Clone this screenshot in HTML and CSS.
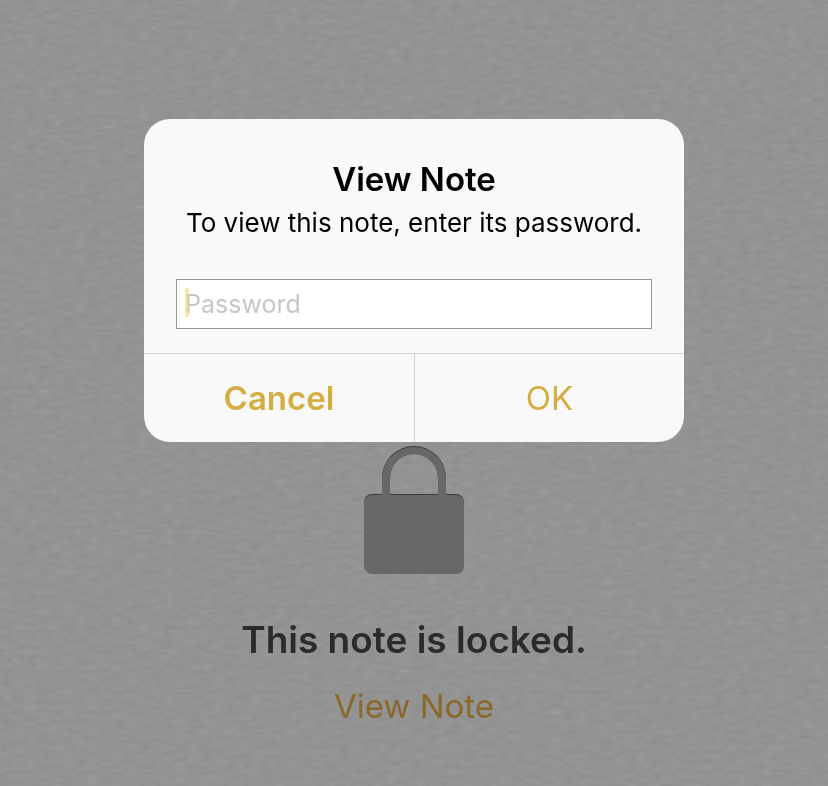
FILE: index.html
```html
<!DOCTYPE html>
<html lang="en">
<head>
  <meta charset="utf-8">
  <meta name="viewport" content="width=device-width, initial-scale=1">
  <title>View Note</title>
  <link rel="stylesheet" href="styles.css">
</head>
<body>
  <svg class="paper" aria-hidden="true">
    <filter id="grain" x="0" y="0" width="100%" height="100%" color-interpolation-filters="sRGB">
      <feTurbulence type="fractalNoise" baseFrequency="0.08 0.2" numOctaves="3" seed="4"/>
      <feColorMatrix values="0.06 0 0 0 0.547  0.06 0 0 0 0.547  0.06 0 0 0 0.547  0 0 0 0 1"/>
    </filter>
    <rect width="100%" height="100%" filter="url(#grain)"/>
  </svg>

  <main class="locked-note">
    <svg class="lock" viewBox="0 0 100 128" aria-hidden="true">
      <path class="lock-edge" d="M18 52V32a32 32 0 0 1 64 0v20h-8V32a24 24 0 0 0-48 0v20z"/>
      <rect class="lock-edge" y="48" width="100" height="60" rx="8"/>
      <path class="lock-fill" d="M18 52V33a32 32 0 0 1 64 0v19h-8V32a24 24 0 0 0-48 0v20z"/>
      <rect class="lock-fill" y="49" width="100" height="79" rx="8"/>
    </svg>
    <h1 class="locked-title">This note is locked.</h1>
    <a class="view-link" href="#dialog">View Note</a>
  </main>

  <form class="dialog" id="dialog" role="dialog" aria-labelledby="dialog-title">
    <div class="dialog-body">
      <h2 class="dialog-title" id="dialog-title">View Note</h2>
      <label class="dialog-message" for="password">To view this note, enter its password.</label>
      <div class="field">
        <input class="password" id="password" type="password" placeholder="Password">
        <span class="caret"></span>
      </div>
    </div>
    <div class="actions">
      <button class="action action-cancel" type="button">Cancel</button>
      <button class="action action-ok" type="submit">OK</button>
    </div>
  </form>
</body>
</html>
```
FILE: styles.css
```css
* {
  box-sizing: border-box;
}

body {
  margin: 0;
  min-height: 100vh;
  background: #939393;
  color: #000;
  font-family: Inter, "Liberation Sans", sans-serif;
}

.paper {
  position: fixed;
  inset: 0;
  width: 100%;
  height: 100%;
}

.locked-note {
  position: relative;
  display: flex;
  flex-direction: column;
  align-items: center;
  padding: 446px 16px 48px;
}

.lock {
  width: 100px;
  height: 128px;
}

.lock-edge {
  fill: #3c3c3c;
}

.lock-fill {
  fill: #686868;
}

.locked-title {
  margin: 42px 0 0;
  color: #2b2b2b;
  font-size: 37px;
  font-weight: 600;
  line-height: 48px;
}

.view-link {
  margin-top: 20px;
  color: #8a672a;
  font-size: 33px;
  line-height: 44px;
  text-decoration: none;
}

.dialog {
  position: absolute;
  top: 119px;
  left: 0;
  right: 0;
  width: 100%;
  max-width: 540px;
  margin: 0 auto;
  overflow: hidden;
  border-radius: 26px;
  background: #f9f9f9;
  text-align: center;
}

.dialog-body {
  display: flex;
  flex-direction: column;
  padding: 38px 32px 24px;
}

.dialog-title {
  margin: 0;
  font-size: 33px;
  font-weight: 600;
  line-height: 44px;
}

.dialog-message {
  font-size: 26px;
  line-height: 44px;
}

.field {
  position: relative;
  margin-top: 34px;
}

.password {
  display: block;
  width: 100%;
  height: 50px;
  padding: 0 8px;
  border: 1px solid #989898;
  border-radius: 0;
  outline: 0;
  background: #fff;
  color: #000;
  font: 25px Inter, "Liberation Sans", sans-serif;
}

.password::placeholder {
  color: #c7c7c7;
  opacity: 1;
}

.caret {
  position: absolute;
  top: 9px;
  left: 9px;
  width: 4px;
  height: 29px;
  border-radius: 1px;
  background: rgba(244, 205, 120, 0.55);
}

.actions {
  display: grid;
  grid-template-columns: 1fr 1fr;
  border-top: 1px solid #d2d2d2;
}

.action {
  height: 88px;
  padding: 0;
  border: 0;
  background: none;
  color: #d5ae43;
  font: 33px Inter, "Liberation Sans", sans-serif;
}

.action-cancel {
  font-weight: 600;
}

.action-ok {
  border-left: 1px solid #d2d2d2;
}
```
